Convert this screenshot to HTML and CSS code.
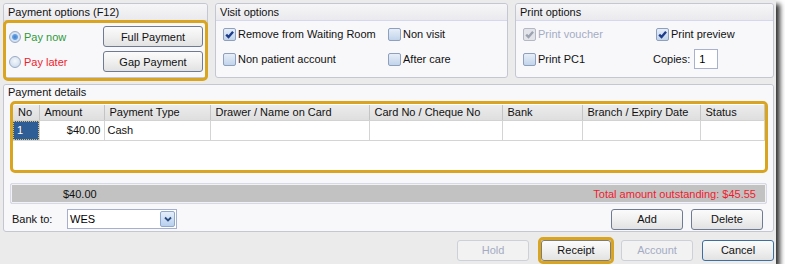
FILE: index.html
```html
<!DOCTYPE html>
<html lang="en">

<head>
  <meta charset="UTF-8">
  <title>Payment</title>
  <link rel="stylesheet" href="styles.css">
</head>

<body>
  <div class="dialog">
    <div class="top">
      <section class="panel pay-opts">
        <h3 class="panel-title">Payment options (F12)</h3>
        <div class="gold pay-box">
          <div class="opt-row">
            <label class="radio on"><span class="dot"></span><span class="green">Pay now</span></label>
            <button class="btn wide">Full Payment</button>
          </div>
          <div class="opt-row">
            <label class="radio"><span class="dot"></span><span class="red">Pay later</span></label>
            <button class="btn wide">Gap Payment</button>
          </div>
        </div>
      </section>

      <section class="panel visit-opts">
        <h3 class="panel-title">Visit options</h3>
        <div class="checks visit-grid">
          <label class="chk on"><span class="box"><svg viewBox="0 0 9 9"><polyline points="1.8,4.6 3.7,6.6 7.4,2.2" /></svg></span>Remove from Waiting Room</label>
          <label class="chk"><span class="box"></span>Non visit</label>
          <label class="chk"><span class="box"></span>Non patient account</label>
          <label class="chk"><span class="box"></span>After care</label>
        </div>
      </section>

      <section class="panel print-opts">
        <h3 class="panel-title">Print options</h3>
        <div class="checks print-grid">
          <label class="chk on off"><span class="box"><svg viewBox="0 0 9 9"><polyline points="1.8,4.6 3.7,6.6 7.4,2.2" /></svg></span>Print voucher</label>
          <label class="chk on"><span class="box"><svg viewBox="0 0 9 9"><polyline points="1.8,4.6 3.7,6.6 7.4,2.2" /></svg></span>Print preview</label>
          <label class="chk"><span class="box"></span>Print PC1</label>
          <label class="copies">Copies: <span class="field">1</span></label>
        </div>
      </section>
    </div>

    <section class="panel details">
      <h3 class="panel-title">Payment details</h3>
      <div class="gold grid-box">
        <table class="grid">
          <colgroup>
            <col style="width:26px">
            <col style="width:65px">
            <col style="width:106px">
            <col style="width:159px">
            <col style="width:133px">
            <col style="width:80px">
            <col style="width:118px">
            <col>
          </colgroup>
          <thead>
            <tr>
              <th>No</th>
              <th>Amount</th>
              <th>Payment Type</th>
              <th>Drawer / Name on Card</th>
              <th>Card No / Cheque No</th>
              <th>Bank</th>
              <th>Branch / Expiry Date</th>
              <th>Status</th>
            </tr>
          </thead>
          <tbody>
            <tr>
              <td class="sel"><span>1</span></td>
              <td class="num">$40.00</td>
              <td>Cash</td>
              <td></td>
              <td></td>
              <td></td>
              <td></td>
              <td></td>
            </tr>
          </tbody>
        </table>
      </div>

      <div class="total-bar">
        <span class="total-amt">$40.00</span>
        <span class="red">Total amount outstanding: $45.55</span>
      </div>

      <div class="bank-row">
        <label class="bank-label">Bank to:</label>
        <div class="select">
          <span>WES</span>
          <span class="drop"><svg viewBox="0 0 8 6"><polyline points="1,1.5 4,4.5 7,1.5" /></svg></span>
        </div>
        <div class="spacer"></div>
        <button class="btn">Add</button>
        <button class="btn">Delete</button>
      </div>
    </section>

    <div class="actions">
      <button class="btn" disabled>Hold</button>
      <div class="gold receipt"><button class="btn">Receipt</button></div>
      <button class="btn" disabled>Account</button>
      <button class="btn default">Cancel</button>
    </div>
  </div>
</body>

</html>
```

FILE: styles.css
```css
html {
  box-sizing: border-box;
  font-family: 'Liberation Sans', Arial, sans-serif;
  font-size: 11px;
  background-color: #fff;
}

*,
*:before,
*::after {
  box-sizing: inherit;
}

body {
  margin: 0;
  color: #111;
}

.dialog {
  width: 776px;
  height: 264px;
  background-color: #ebebeb;
  box-shadow: 4px 4px 5px rgba(0, 0, 0, 0.8);
  padding: 3px 2px 0 3px;
}

.top {
  display: flex;
  gap: 7px;
  height: 75px;
}

.panel {
  background-color: #f8f8fa;
  border: 1px solid #c4c6d2;
  border-radius: 3px;
}

.panel-title {
  margin: 0;
  font-size: 11px;
  font-weight: normal;
  height: 17px;
  line-height: 16px;
  padding-left: 4px;
  background: linear-gradient(#f6f6f8, #eaeaee);
  border-bottom: 1px solid #d4d8ee;
  border-radius: 3px 3px 0 0;
}

.gold {
  border: 3px solid #d9a521;
  border-radius: 5px;
}

/* payment options */
.pay-opts {
  width: 205px;
}

.pay-box {
  margin: -1px -1px 0;
  height: 61px;
  padding: 3px 2px 0 3px;
  display: flex;
  flex-direction: column;
  gap: 4px;
}

.opt-row {
  display: flex;
  align-items: center;
  justify-content: space-between;
  height: 21px;
}

.radio {
  display: flex;
  align-items: center;
  gap: 3px;
}

.radio .dot {
  width: 12px;
  height: 12px;
  border-radius: 50%;
  border: 1px solid #9aaac4;
  background: radial-gradient(circle at 50% 40%, #f4f8fc, #c6d6ea);
}

.radio.on .dot {
  background: radial-gradient(circle, #3c7ed0 0, #6aa2e0 2.5px, #d6e4f4 3.5px, #c6d6ea 100%);
}

.green {
  color: #2e9a3a;
}

.red {
  color: #ee1c2e;
}

.btn {
  font-family: inherit;
  font-size: 11px;
  color: #111;
  width: 72px;
  height: 21px;
  padding: 0;
  border: 1px solid #6f7b92;
  border-radius: 3px;
  background: linear-gradient(#fbfbfb, #f0f0f0 50%, #e2e2e2);
}

.btn.wide {
  width: 100px;
}

.btn:disabled {
  color: #a4acc4;
  border-color: #ccd0d8;
  background: #f2f2f2;
}

.btn.default {
  border-color: #3c6fa0;
}

/* check boxes */
.checks {
  display: grid;
  row-gap: 5px;
  padding: 3px 7px 0;
}

.visit-opts {
  width: 293px;
}

.visit-grid {
  grid-template-columns: 165px auto;
}

.print-opts {
  width: 259px;
}

.print-grid {
  grid-template-columns: 133px auto;
}

.chk {
  display: flex;
  align-items: center;
  gap: 2px;
  height: 20px;
}

.chk .box {
  width: 13px;
  height: 13px;
  border: 1px solid #8ea0be;
  border-radius: 2px;
  background: linear-gradient(#e6eef8, #c2d4ea);
  display: flex;
}

.chk svg {
  width: 11px;
  height: 11px;
  fill: none;
  stroke: #1e3c8c;
  stroke-width: 1.9;
}

.chk.off {
  color: #a4acc4;
}

.chk.off .box {
  border-color: #b4b8c4;
  background: #e2e4ea;
}

.chk.off svg {
  stroke: #9ca2b0;
}

.copies {
  display: flex;
  align-items: center;
  gap: 4px;
  height: 20px;
  margin-left: -3px;
}

.field {
  width: 24px;
  height: 20px;
  border: 1px solid #a9b2cc;
  background-color: #fff;
  padding: 3px 0 0 4px;
  color: #000;
}

/* payment details */
.details {
  margin-top: 6px;
  height: 148px;
  width: 771px;
}

.details .panel-title {
  height: 16px;
  line-height: 15px;
  border-bottom: none;
  background: #f8f8fa;
}

.grid-box {
  margin: 0 5px 0 6px;
  height: 72px;
  background-color: #fff;
  padding-top: 1px;
}

.grid {
  width: 100%;
  table-layout: fixed;
  border-collapse: collapse;
}

.grid th {
  font-weight: normal;
  text-align: left;
  height: 15px;
  padding: 0 5px;
  background: linear-gradient(#ececec, #dedede);
  border-right: 1px solid #c4c4c4;
  border-bottom: 1px solid #d2d2d2;
  white-space: nowrap;
  overflow: hidden;
}

.grid td {
  height: 20px;
  padding: 0 3px;
  border-right: 1px solid #d4d4d4;
  border-bottom: 1px solid #d4d4d4;
  white-space: nowrap;
}

.grid td.num {
  text-align: right;
}

.grid td.sel {
  padding: 0;
}

.grid td.sel span {
  display: block;
  height: 19px;
  line-height: 17px;
  padding-left: 3px;
  background-color: #2f5e96;
  color: #fff;
  border: 1px dotted #d8c070;
}

.total-bar {
  margin: 10px 6px 0 6px;
  height: 21px;
  border: 1px solid #d6d9e8;
  border-radius: 2px;
  background-color: #c2c2c2;
  box-shadow: inset 0 0 0 1px #f2f2f4;
  display: flex;
  align-items: center;
  justify-content: space-between;
  padding: 0 10px 0 52px;
}

.bank-row {
  display: flex;
  align-items: center;
  gap: 8px;
  margin: 4px 10px 0 8px;
  height: 22px;
}

.bank-label {
  width: 47px;
}

.select {
  width: 110px;
  height: 20px;
  border: 1px solid #a6b0cc;
  background-color: #fff;
  display: flex;
  align-items: center;
  justify-content: space-between;
  padding: 0 1px 0 2px;
  color: #000;
}

.drop {
  width: 15px;
  height: 16px;
  border: 1px solid #8fa8d0;
  border-radius: 2px;
  background: linear-gradient(#e4eefa, #b8d0ee);
  display: flex;
  align-items: center;
  justify-content: center;
}

.drop svg {
  width: 8px;
  height: 6px;
  fill: none;
  stroke: #2a4c80;
  stroke-width: 1.8;
}

.spacer {
  flex: 1;
}

/* bottom buttons */
.actions {
  display: flex;
  justify-content: flex-end;
  align-items: center;
  gap: 9px;
  margin-top: 5px;
  padding-right: 0;
  height: 26px;
}

.receipt {
  padding: 0;
  border-radius: 5px;
  margin-right: -2px;
}

.receipt .btn {
  width: 70px;
  border-color: #7c7c7c;
}
```
